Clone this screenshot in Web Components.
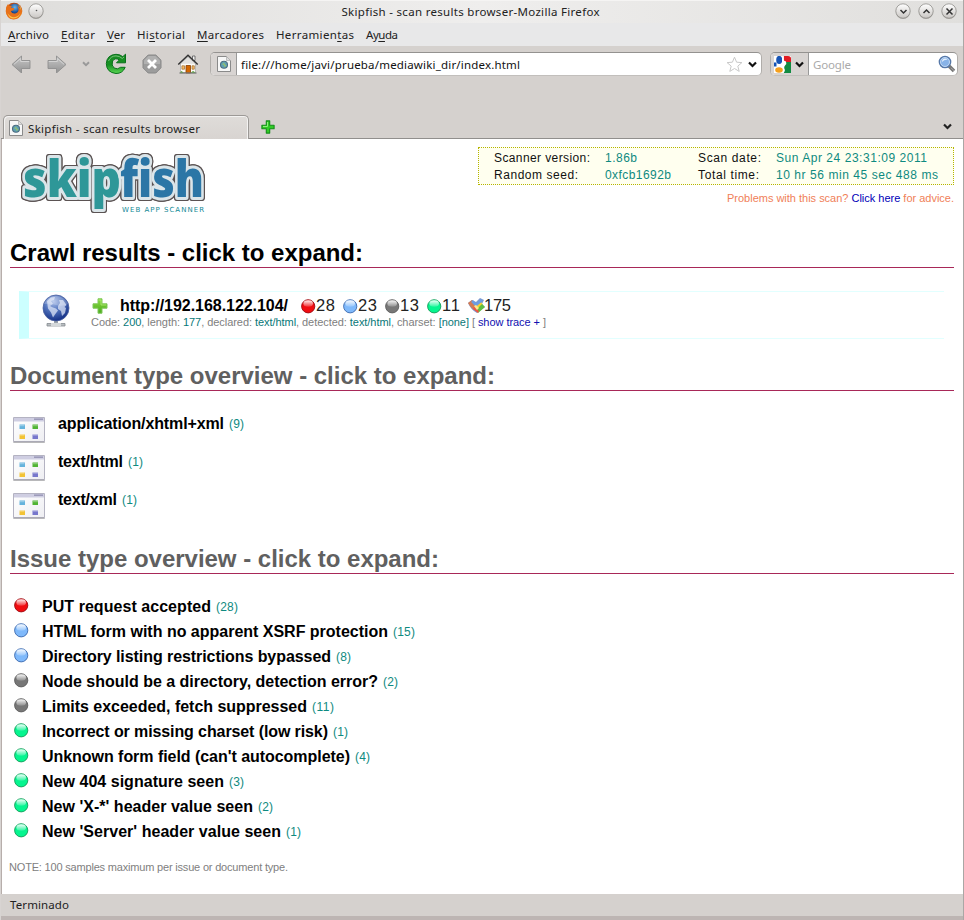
<!DOCTYPE html>
<html lang="es"><head><meta charset="utf-8"><title>Skipfish - scan results browser</title>
<style>html,body{margin:0;height:920px;overflow:hidden;background:#fff}</style></head>
<body><browser-window><scan-report></scan-report></browser-window>
<script>
const ICONS={
firefox:[18,18,`<defs><radialGradient id="a" cx=".5" cy=".35"><stop offset="0" stop-color="#69b6ec"/><stop offset="1" stop-color="#15458f"/></radialGradient><linearGradient id="b" x2="0" y2="1"><stop offset="0" stop-color="#b9470e"/><stop offset=".55" stop-color="#e8731a"/><stop offset="1" stop-color="#f6a623"/></linearGradient></defs><circle cx="9" cy="9" r="8.3" fill="url(#b)"/><circle cx="9.8" cy="7" r="5.6" fill="url(#a)"/><path d="M1 8Q1 4 3 2l1.500 2 3-.2-1.700 2 3.600.4-.8 2-2.800.8q1 3 4.400 2.400 4-1 3.200-5.200l-1-2.800q3.600 2 3.700 6-.6 8-8 8-7-.8-7.100-9z" fill="#e7711b"/><path d="M2.500 11q3 5 8 4 4-1 5-5-1 6-7 6.600-4.500 0-6-5.600z" fill="#fbc34a"/><path d="M12.500 1.800q3.800 2.600 3.800 7.200-.7-4-3.800-7.200z" fill="#fbd260"/>`],
round:[16,17,`<defs><linearGradient id="a" x2="0" y2="1"><stop offset="0" stop-color="#fff"/><stop offset="1" stop-color="#c9c6c3"/></linearGradient></defs><circle cx="8" cy="8.800" r="7.200" fill="#a9a6a3"/><circle cx="8" cy="8" r="7.200" fill="url(#a)" stroke="#918f8c" stroke-width=".8"/>`],
back:[20,18,`<defs><linearGradient id="a" x2="0" y2="1"><stop offset="0" stop-color="#c8c8c8"/><stop offset="1" stop-color="#929292"/></linearGradient></defs><path d="M1 9.500 10.500 1v4.500H19v8h-8.500V18z" fill="url(#a)" stroke="#8e8e8e" stroke-linejoin="round" stroke-width=".9"/><path d="M3 9.300 9.700 3.500v3h8.500" fill="none" stroke="#d3d3d3"/>`],
chev:[9,7,`<path d="M1 1.500 4.500 5 8 1.500" fill="none" stroke="currentColor" stroke-width="2.200"/>`],
reload:[22,22,`<defs><linearGradient id="a" x2="0" y2="1"><stop offset="0" stop-color="#1b8c25"/><stop offset=".55" stop-color="#159021"/><stop offset="1" stop-color="#5bd653"/></linearGradient></defs><path d="M17.800 3.700 20.500 1.200V9.800h-9l2.900-2.900Q10 4.200 7.600 8q-1.600 4.500 1.500 7 3.600 2 6.500-.7h4.600Q17.500 20.600 11 20.500 1.500 19.500 1.300 10.500 2 1.800 11 1.300q4 0 6.800 2.400z" fill="url(#a)" stroke="#08711a" stroke-width="1"/><path d="M3.500 8Q6 2.800 11 2.900q3.500 0 6.300 2.600L19 4" stroke="#77c47a" fill="none"/>`],
stop:[20,20,`<path d="M6.200 1h7.600L19 6.200v7.600L13.800 19H6.200L1 13.800V6.200z" fill="#9c9c9c" stroke="#888"/><path d="M6.500 2h7L18 6.500V10H2V6.500z" fill="#b1b1b1"/><path d="m6 6 8 8m0-8-8 8" stroke="#fff" stroke-width="2.800"/>`],
home:[22,22,`<path d="M15.500 3H18v4.500h-2.500z" fill="#f3f3f3" stroke="#555" stroke-width=".8"/><path d="M3.500 11 11 4l7.500 7v8.500h-15z" fill="#fbfaf6" stroke="#999" stroke-width=".6"/><path d="M1.300 11.500 11 2.200l9.700 9.300" stroke="#333" stroke-width="1.500" fill="none"/><path d="M4 10.800 11 4.200l7 6.600z" fill="#e2e1df"/><path d="M9 12.500h4.500V20H9z" fill="#d46700" stroke="#8a3f00" stroke-width=".8"/><path d="M4.900 12.800h2.600v3.400H4.900zM15 12.800h2.300v3.400H15z" fill="#f9bc61" stroke="#9c6a30" stroke-width=".7"/><path d="M2.500 20h17" stroke="#777" stroke-width="1.300"/><path d="M3 19.500l1.500-1.500 2 1.500zm11 0 2-1.500 2.500 1.500z" fill="#519c3a"/>`],
page:[14,16,`<path d="M.5.500h9l4 4v11H.5z" fill="#f7f7f7" stroke="#8a8a8a"/><path d="M9.500.500v4h4" fill="#ddd" stroke="#aaa" stroke-width=".7"/><circle cx="7" cy="8.800" r="3.500" fill="#5e9fb3" stroke="#4b6c80" stroke-width="1.100"/><path d="M5 8.500l2-2 1 2 1.600 1-2 1.800L6.800 9z" fill="#8ebd76"/>`],
star:[17,17,`<path d="m8.500 1.200 2.100 5 5.300.4-4.100 3.500 1.400 5.300-4.700-2.900-4.700 2.900 1.400-5.300L1.100 6.600l5.300-.4z" fill="#fff" stroke="#c8c8c8"/>`],
google:[17,17,`<path d="M0 0h17v17H0z" fill="#fff"/><path d="M9.500 0H14q3 0 3 2.500V6H10z" fill="#e11b22"/><path d="M11 6h6v11H9.500z" fill="#128b42"/><path d="M0 6.500h2.500v4H0z" fill="#1654b5"/><ellipse cx="5.200" cy="3.900" rx="3" ry="4" fill="#1654b5"/><path d="M8 0h1.800v4.500L12 5.500q1 2-1 4-2 1-1 2.500 2 2.500-.5 5H8z" fill="#fff"/><ellipse cx="5" cy="14" rx="3.800" ry="2.800" fill="#f5a01d"/>`],
search:[18,18,`<path d="m10.500 10.500 5.500 5.500" stroke="#777" stroke-width="3.500"/><path d="m13 12.800 3 3" stroke="#aaa"/><circle cx="7" cy="7" r="5.600" fill="#88b3e8" stroke="#5678a8" stroke-width="1.500"/><circle cx="7" cy="7" r="4.500" fill="none" stroke="#cfe2f8" stroke-width=".8"/><path d="M4 7q0-3 3-3.400 2 0 2.500 1Q5.500 4.700 4 7z" fill="#e6f1fd"/>`],
plus:[16,16,`<defs><linearGradient id="a" x2="0" y2="1"><stop offset="0" stop-color="#8bdd42"/><stop offset="1" stop-color="#4aaa1e"/></linearGradient></defs><path d="M6 .800h4v5h5v4.400h-5v5H6v-5H1V5.800h5z" fill="url(#a)" stroke="#7fc75a"/><path d="M6.500 2h2.500v5h5" fill="none" stroke="#b7ee7d" stroke-width=".7"/>`],
newtab:[14,14,`<path d="M5.300.900h3.400v4.400h4.400v3.400H8.700v4.400H5.300V8.700H.9V5.300h4.400z" fill="#30cc25" stroke="#148d19" stroke-width="1.100" stroke-linejoin="round"/><path d="M6.500 2v4.500H2" stroke="#8cf07c" fill="none"/>`],
globe:[30,34,`<defs><radialGradient id="a" cx=".4" cy=".25" r=".8"><stop offset="0" stop-color="#a9bde8"/><stop offset=".45" stop-color="#5274bd"/><stop offset="1" stop-color="#0d2880"/></radialGradient></defs><path d="M13 26h4v4h-4z" fill="#9aa2aa"/><path d="M6 29.500h18v2.500H6z" fill="#b8bdc0" stroke="#858b90" stroke-width=".8"/><path d="M10 29h10v3.500H10z" fill="#d5d9db"/><circle cx="15" cy="14" r="13" fill="url(#a)" stroke="#4b62a0" stroke-width=".8"/><path d="M6 7 10 3.500l4-.5-1 3-3 1 2 3-3 2 3 1.500 3 1 2 2-3 4-2 3-2-5-3-4zm12-1 4 0 3.500 5-2 2 1.500 1-1 5-3 3-1-5-3-2 0-3 2-3z" fill="#dbe3f5" opacity=".75"/><path d="M3 10q4-8 12-8t12 8q-6 3-12 1T3 10z" fill="#fff" opacity=".22"/>`],
app:[32,26,`<defs><linearGradient id="a" x2="1" y2="1"><stop offset="0" stop-color="#fff"/><stop offset="1" stop-color="#eeeef2"/></linearGradient></defs><path d="M.5.500h31v24H.5z" fill="url(#a)" stroke="#b4b3c2"/><path d="M1 1h30v3.500H1z" fill="#cfcee2"/><path d="M21 2.200h9" stroke="#9a98b8" stroke-width="1.500"/><path d="M.3 25.200h31.500" stroke="#99999c"/><path d="M6.500 7.500h5.500v4.500H6.500z" fill="#65b3dc"/><path d="M19.500 7.500H25V12h-5.500z" fill="#50b433"/><path d="M6.500 17.500H12V22H6.500z" fill="#f2c335"/><path d="M19.500 17.500H25V22h-5.500z" fill="#7777cc"/><path d="M6.500 8h5v1.300h-5zM6.500 17.500h5v1.300h-5zM20 8h5v1.300h-5zM20 17.500h5v1.300h-5z" fill="#fff" opacity=".3"/>`],
rainbow:[17,15,`<path d="m0 5 4-3 4 2 4-4 4 2-2 4 3 3-8 6Q3 12 0 5z" fill="#7c9ad0"/><path d="m0 5 4-3 5 6-3 4Q2 9 0 5z" fill="#d57b52"/><path d="m7 8 6-4 2 3-6 4z" fill="#f7d22d"/><path d="m9 11 5-5 3 3-7 6z" fill="#5ebf43"/><path d="m4 3 4 4 6-5" fill="none" stroke="#6b9de2" stroke-width="2.600"/><path d="m6 9-1 2 5 4 1-2z" fill="#ef5540"/><path d="m6 8 2-1 3 3-2 2z" fill="#ffe68c"/>`]
};
const BALLS={red:['#f00c10','#9c0910'],blue:['#7fb9fb','#3b68ad'],gray:['#777','#5b5b5b'],green:['#05f58f','#129b57']};
function make(name,html){customElements.define(name,class extends HTMLElement{constructor(){super();this.attachShadow({mode:'open'}).innerHTML=html}})}

customElements.define('ui-icon',class extends HTMLElement{connectedCallback(){
 const i=ICONS[this.getAttribute('name')];
 this.attachShadow({mode:'open'}).innerHTML=`<style>:host{display:block;flex:none;width:${i[0]}px;height:${i[1]}px}svg{display:block;width:100%;height:100%}</style><svg viewBox="0 0 ${i[0]} ${i[1]}">${i[2]}</svg>`}});

customElements.define('severity-ball',class extends HTMLElement{connectedCallback(){
 const [c,d]=BALLS[this.getAttribute('color')];
 this.attachShadow({mode:'open'}).innerHTML=`<style>:host{display:block;flex:none;width:15px;height:15px}svg{display:block}</style><svg width="15" height="15"><defs><linearGradient id="h" x2="0" y2="1"><stop offset="0" stop-color="#fff" stop-opacity=".95"/><stop offset="1" stop-color="#fff" stop-opacity=".15"/></linearGradient></defs><circle cx="7.200" cy="7.300" r="6.600" fill="${c}" stroke="${d}" stroke-width=".9"/><ellipse cx="7.200" cy="4.500" rx="4.800" ry="3.300" fill="url(#h)"/></svg>`}});

make('title-bar',`<style>
:host{display:flex;height:23px;box-sizing:border-box;padding:0 6px 0 4px;background:linear-gradient(90deg,#dedddb,#efeeed 50%,#e0dfdd);border-top:1px solid #f5f4f3;align-items:center;font:11.500px "Noto Sans",sans-serif;color:#222}
.l,.r{display:flex;width:180px;gap:5px;align-items:center}.l{margin-top:-2px}.r{justify-content:flex-end;gap:7px;margin-top:-1px}.t{flex:1;display:flex;justify-content:center;padding-right:21px;margin-top:-2px}
.b{display:grid;place-items:center;width:16px;height:17px}.b>*{grid-area:1/1}.b svg{margin-top:-1px}</style>
<div class="l"><ui-icon name="firefox"></ui-icon><span class="b"><ui-icon name="round"></ui-icon><svg width="3" height="3"><circle cx="1.500" cy="1.500" r=".8" fill="#555"/></svg></span></div>
<div class="t"><fit-text w="258">Skipfish - scan results browser-Mozilla Firefox</fit-text></div>
<div class="r"><span class="b"><ui-icon name="round"></ui-icon><svg width="9" height="9"><path d="m1.500 3 3 3 3-3" fill="none" stroke="#333" stroke-width="1.500"/></svg></span><span class="b"><ui-icon name="round"></ui-icon><svg width="9" height="9"><path d="m1.500 6 3-3 3 3" fill="none" stroke="#333" stroke-width="1.500"/></svg></span><span class="b"><ui-icon name="round"></ui-icon><svg width="9" height="9"><path d="m1.500 1.500 6 6m0-6-6 6" fill="none" stroke="#333" stroke-width="1.500"/></svg></span></div>`);

make('menu-bar',`<style>:host{display:flex;height:23px;padding-left:7px;align-items:center;background:#e8e8e9;font:11.500px/24px "Noto Sans",sans-serif;color:#222}u{text-underline-offset:2px}
fit-text{margin-right:12px}</style>
<fit-text w="41"><u>A</u>rchivo</fit-text><fit-text w="34"><u>E</u>ditar</fit-text><fit-text w="18"><u>V</u>er</fit-text><fit-text w="48">Hi<u>s</u>torial</fit-text><fit-text w="67"><u>M</u>arcadores</fit-text><fit-text w="78">Herramien<u>t</u>as</fit-text><fit-text w="32">Ay<u>u</u>da</fit-text>`);

make('nav-bar',`<style>:host{display:flex;height:69px;box-sizing:border-box;padding:6px 4px 0 8px;align-items:flex-start;background:#d5d1ce;font:11.500px "Noto Sans",sans-serif;color:#111}
.n{display:flex;align-items:center;height:24px;width:200px}.fwd{transform:scaleX(-1);margin-left:16px}
.box{display:flex;height:24px;box-sizing:border-box;border:1px solid #b0adaa;border-top-color:#949290;border-bottom-color:#c2bfbc;border-radius:5px;background:#fff;align-items:center;overflow:hidden}
.id{display:flex;align-self:stretch;align-items:center;background:#d8d4d2;border-right:1px solid #999;box-sizing:border-box}
.u{width:552px}.u .id{width:26px;padding-left:6px}.u fit-text{margin:1px 0 0 4px}.s{width:188px;margin-left:8px}.s .id{width:38px;padding-left:3px;gap:4px}.s fit-text{color:#aaa;margin:1px 0 0 4px}.sp{flex:1}</style>
<div class="n"><ui-icon name="back" style="margin-left:2px"></ui-icon><ui-icon class="fwd" name="back"></ui-icon><ui-icon name="chev" style="color:#999;margin-left:15px;width:8px;height:6px"></ui-icon><ui-icon name="reload" style="margin-left:15px"></ui-icon><ui-icon name="stop" style="margin-left:15px"></ui-icon><ui-icon name="home" style="margin-left:15px"></ui-icon></div>
<div class="box u" style="margin-left:1px"><span class="id"><ui-icon name="page"></ui-icon></span><fit-text w="279">file:///home/javi/prueba/mediawiki_dir/index.html</fit-text><span class="sp"></span><ui-icon name="star"></ui-icon><ui-icon name="chev" style="margin:0 4px 0 5px"></ui-icon></div>
<div class="box s"><span class="id"><ui-icon name="google"></ui-icon><ui-icon name="chev"></ui-icon></span><fit-text w="38">Google</fit-text><span class="sp"></span><ui-icon name="search" style="margin-right:1px"></ui-icon></div>`);

make('tab-strip',`<style>:host{display:flex;height:24px;box-sizing:border-box;background:#d5d1ce;border-bottom:1px solid #918f8d;padding:0 11px 0 2px;font:11.500px "Noto Sans",sans-serif;color:#222;align-items:center}
.tab{display:flex;align-items:center;width:246px;height:24px;box-sizing:border-box;border:1px solid #9c9996;border-bottom:0;border-radius:5px 5px 0 0;box-shadow:inset 1px 1px #f4f3f2,inset -1px 0 #f4f3f2;background:linear-gradient(#dfdcd9,#d8d4d1);padding:2px 0 0 5px;gap:5px}.tab fit-text{margin-top:1px}</style>
<div class="tab"><ui-icon name="page"></ui-icon><fit-text w="172">Skipfish - scan results browser</fit-text></div><ui-icon name="newtab" style="margin-left:12px"></ui-icon><span style="flex:1"></span><ui-icon name="chev"></ui-icon>`);

make('status-bar',`<style>:host{display:block;height:26px;box-sizing:border-box;background:#d5d1ce;border-bottom:4px solid #bdb5b3;padding-left:9px;font:11.500px/22px "Noto Sans",sans-serif;color:#222}</style><fit-text w="59">Terminado</fit-text>`);

make('browser-window',`<style>:host{display:flex;flex-direction:column;width:964px;height:920px;box-sizing:border-box;border-left:1px solid #d8d4d2;border-right:1px solid #aaa7a5;background:#fff}
main{flex:1;min-height:0;border-left:1px solid #b7aeab}</style><title-bar></title-bar><menu-bar></menu-bar><nav-bar></nav-bar><tab-strip></tab-strip><main><slot></slot></main><status-bar></status-bar>`);

make('skipfish-logo',`<style>:host{display:block;width:195px;height:84px}svg{display:block}.w{filter:drop-shadow(1px 0 #5b5353) drop-shadow(-1px 0 #5b5353) drop-shadow(0 1px #5b5353) drop-shadow(0 -1px #5b5353)}.w text{font:800 51px "Open Sans",sans-serif;stroke-linejoin:round;paint-order:stroke;stroke:#dbe5e9;stroke-width:6px}.c{font:7px "DejaVu Sans",sans-serif}</style>
<svg width="195" height="84"><g class="w">
<text x="3" y="61" textLength="98" lengthAdjust="spacingAndGlyphs" fill="#2e9798">skip</text><text x="100" y="61" textLength="84" lengthAdjust="spacingAndGlyphs" fill="#2b76a6">fish</text></g>
<text class="c" x="102" y="76" textLength="82" fill="#138a96">WEB APP SCANNER</text></svg>`);

make('scan-info',`<style>:host{display:grid;width:476px;height:38px;box-sizing:border-box;border:1px dotted #b5b500;background:#ffffef;padding:2px 0 0 15px;grid-template-columns:111px 93px 78px 1fr;grid-auto-rows:17px;font:12px/17px "Liberation Sans",sans-serif;color:#111}b{font-weight:400;color:#0e8a80}</style>
<fit-text w="96">Scanner version:</fit-text><b><fit-text w="32">1.86b</fit-text></b><fit-text w="63">Scan date:</fit-text><b><fit-text w="151">Sun Apr 24 23:31:09 2011</fit-text></b>
<fit-text w="84">Random seed:</fit-text><b><fit-text w="66">0xfcb1692b</fit-text></b><fit-text w="61">Total time:</fit-text><b><fit-text w="162">10 hr 56 min 45 sec 488 ms</fit-text></b>`);

make('section-title',`<style>:host{display:block;height:29px;box-sizing:border-box;border-bottom:1px solid #a82858;font:700 24px/28px "Liberation Sans",sans-serif}</style><slot></slot>`);

make('crawl-entry',`<style>:host{display:flex;margin:23px 10px 0 9px;height:48px;box-sizing:border-box;border:solid #e2ffff;border-width:1px 0;border-left:10px solid #cff;padding-left:12px;font:11px/13px "Liberation Sans",sans-serif;color:#808080}
.d{margin-left:20px}.a{display:flex;height:24px;box-sizing:border-box;align-items:center;padding-top:3px}.a strong{font-size:16px;line-height:23px;color:#000;margin:0 13px 0 12px}.k{display:flex;align-items:center;margin-right:8px;font-size:16.500px;line-height:23px;color:#222}i{font-style:normal;color:#087878}em{font-style:normal;color:#1010b0}.k severity-ball{margin-top:2px}</style>
<ui-icon name="globe" style="margin-top:2px"></ui-icon><div class="d"><div class="a"><ui-icon name="plus" style="margin-left:1px"></ui-icon><strong><fit-text w="168">http://192.168.122.104/</fit-text></strong>
<span class="k"><severity-ball color="red"></severity-ball><fit-text w="19">28</fit-text></span><span class="k"><severity-ball color="blue"></severity-ball><fit-text w="19">23</fit-text></span><span class="k"><severity-ball color="gray"></severity-ball><fit-text w="19">13</fit-text></span><span class="k"><severity-ball color="green"></severity-ball><fit-text w="18">11</fit-text></span><span class="k"><ui-icon name="rainbow"></ui-icon><fit-text w="27" style="margin-left:-1px">175</fit-text></span></div>
<fit-text w="455">Code: <i>200</i>, length: <i>177</i>, declared: <i>text/html</i>, detected: <i>text/html</i>, charset: <i>[none]</i> [ <em>show trace +</em> ]</fit-text></div>`);

customElements.define('result-row',class extends HTMLElement{connectedCallback(){
 const a=n=>this.getAttribute(n),doc=this.hasAttribute('doc');
 this.attachShadow({mode:'open'}).innerHTML=`<style>:host{display:flex;height:${doc?38:25}px;align-items:flex-start;padding-left:${doc?3:4}px;font:700 16px/25px "Liberation Sans",sans-serif;color:#000}
 span{font-weight:400;font-size:12px;color:#0e8a80;margin:1px 0 0 5px}</style>
 ${doc?'<ui-icon name="app" style="margin:6px 13px 0 0"></ui-icon>':`<severity-ball color="${a('color')}" style="margin:4px 13px 0 0"></severity-ball>`}<fit-text w="${a('w')}">${this.textContent}</fit-text><span><fit-text w="${a('count').length>1?22:15}">(${a('count')})</fit-text></span>`}});

make('scan-report',`<style>:host{display:block;padding:8px 9px 0 8px;font:11px "Liberation Sans",sans-serif}
header{display:flex;justify-content:space-between;height:92px}skipfish-logo{margin:-11px 0 0 10px}.r{display:flex;flex-direction:column;align-items:flex-end}.p{color:#f08058;margin-top:7px}.p a{color:#0000b8}
.g{color:#606060}.docs{padding-top:20px;height:154px;box-sizing:border-box}.iss{padding-top:20px}.note{color:#808080;margin:17px 0 0 -1px}</style>
<header><skipfish-logo></skipfish-logo><div class="r"><scan-info></scan-info><div class="p"><fit-text w="227">Problems with this scan? <a>Click here</a> for advice.</fit-text></div></div></header>
<section-title><fit-text w="353">Crawl results - click to expand:</fit-text></section-title>
<crawl-entry></crawl-entry>
<section-title class="g" style="margin-top:23px"><fit-text w="485">Document type overview - click to expand:</fit-text></section-title>
<div class="docs"><result-row doc w="166" count="9">application/xhtml+xml</result-row><result-row doc w="65" count="1">text/html</result-row><result-row doc w="59" count="1">text/xml</result-row></div>
<section-title class="g"><fit-text w="429">Issue type overview - click to expand:</fit-text></section-title>
<div class="iss"><result-row color="red" w="169" count="28">PUT request accepted</result-row><result-row color="blue" w="346" count="15">HTML form with no apparent XSRF protection</result-row><result-row color="blue" w="289" count="8">Directory listing restrictions bypassed</result-row><result-row color="gray" w="336" count="2">Node should be a directory, detection error?</result-row><result-row color="gray" w="265" count="11">Limits exceeded, fetch suppressed</result-row><result-row color="green" w="286" count="1">Incorrect or missing charset (low risk)</result-row><result-row color="green" w="308" count="4">Unknown form field (can't autocomplete)</result-row><result-row color="green" w="182" count="3">New 404 signature seen</result-row><result-row color="green" w="211" count="2">New 'X-*' header value seen</result-row><result-row color="green" w="239" count="1">New 'Server' header value seen</result-row></div>
<div class="note"><fit-text w="279">NOTE: 100 samples maximum per issue or document type.</fit-text></div>`);

/* Spreads its text evenly over the width given in "w". */
customElements.define('fit-text',class extends HTMLElement{connectedCallback(){
 this.attachShadow({mode:'open'}).innerHTML='<style>:host{display:inline-block;vertical-align:top;white-space:nowrap;flex:none}</style><slot></slot>';
 this.style.width='max-content';
 const w=+this.getAttribute('w'),n=this.textContent.length,nat=this.getBoundingClientRect().width;
 this.style.letterSpacing=((w-nat)/Math.max(1,n-1))+'px';this.style.width=w+'px'}});
</script></body></html>
